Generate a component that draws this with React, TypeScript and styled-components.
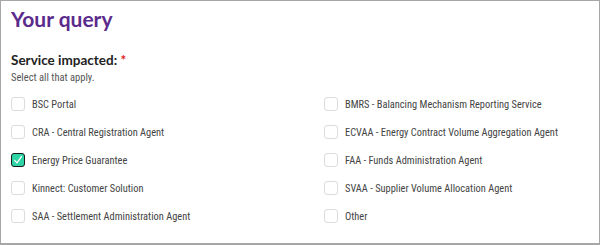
import styled, { createGlobalStyle } from "styled-components";

const GlobalStyle = createGlobalStyle`
    html, body {
        margin: 0;
        padding: 0;
        background: #ffffff;
    }
    * {
        box-sizing: border-box;
    }
`

const services: { label: string; checked?: boolean }[][] = [
    [
        { label: "BSC Portal" },
        { label: "CRA - Central Registration Agent" },
        { label: "Energy Price Guarantee", checked: true },
        { label: "Kinnect: Customer Solution" },
        { label: "SAA - Settlement Administration Agent" },
    ],
    [
        { label: "BMRS - Balancing Mechanism Reporting Service" },
        { label: "ECVAA - Energy Contract Volume Aggregation Agent" },
        { label: "FAA - Funds Administration Agent" },
        { label: "SVAA - Supplier Volume Allocation Agent" },
        { label: "Other" },
    ],
]

const CheckMark = () => (
    <svg width="10" height="10" viewBox="0 0 10 10">
        <path d="M1.6 5.4 L4 7.9 L8.4 1.6" fill="none" stroke="#ffffff" strokeWidth="1.3" strokeLinecap="round" strokeLinejoin="round" />
    </svg>
)

const Option = ({ label, checked }: { label: string; checked?: boolean }) => (
    <OptionRow>
        <Box $checked={checked}>{checked && <CheckMark />}</Box>
        <Label>{label}</Label>
    </OptionRow>
)

export default function App() {
    return (
        <>
            <GlobalStyle />
            <Panel>
                <Title>Your query</Title>
                <FieldLabel>
                    Service impacted: <Required>*</Required>
                </FieldLabel>
                <Hint>Select all that apply.</Hint>
                <Columns>
                    {services.map((col, i) => (
                        <Column key={i}>
                            {col.map((s) => (
                                <Option key={s.label} label={s.label} checked={s.checked} />
                            ))}
                        </Column>
                    ))}
                </Columns>
            </Panel>
        </>
    )
}

const Panel = styled.section`
    width: 600px;
    height: 245px;
    border: 1px solid #a6a6a6;
    border-bottom-width: 2px;
    padding: 5px 10px 0 10px;
    font-family: Lato, "Liberation Sans", sans-serif;
    color: #333333;
`
const Title = styled.h1`
    margin: 0;
    font-size: 21px;
    font-weight: 700;
    color: #5b2b8c;
    line-height: 26px;
`
const FieldLabel = styled.h2`
    margin: 19px 0 0 0;
    font-size: 13.5px;
    font-weight: 700;
    color: #222222;
    line-height: 18px;
`
const Required = styled.span`
    color: #e0201b;
`
const Hint = styled.p`
    margin: 2px 0 0 0;
    font-family: "Roboto Condensed", Roboto, sans-serif;
    font-size: 10.5px;
    color: #555555;
    line-height: 14px;
`
const Columns = styled.div`
    display: grid;
    grid-template-columns: 313px 1fr;
    margin-top: 5px;
`
const Column = styled.div`
    display: flex;
    flex-direction: column;
`
const OptionRow = styled.div`
    display: flex;
    align-items: center;
    gap: 7px;
    height: 28px;
`
const Box = styled.span<{ $checked?: boolean }>`
    width: 14px;
    height: 14px;
    border-radius: 3px;
    display: flex;
    align-items: center;
    justify-content: center;
    border: 1px solid ${(p) => (p.$checked ? "#1a1a1a" : "#dcdcdc")};
    background: ${(p) => (p.$checked ? "#2ed3a6" : "#ffffff")};
    flex-shrink: 0;
`
const Label = styled.span`
    font-family: "Roboto Condensed", Roboto, sans-serif;
    font-size: 10.4px;
    color: #444444;
`
